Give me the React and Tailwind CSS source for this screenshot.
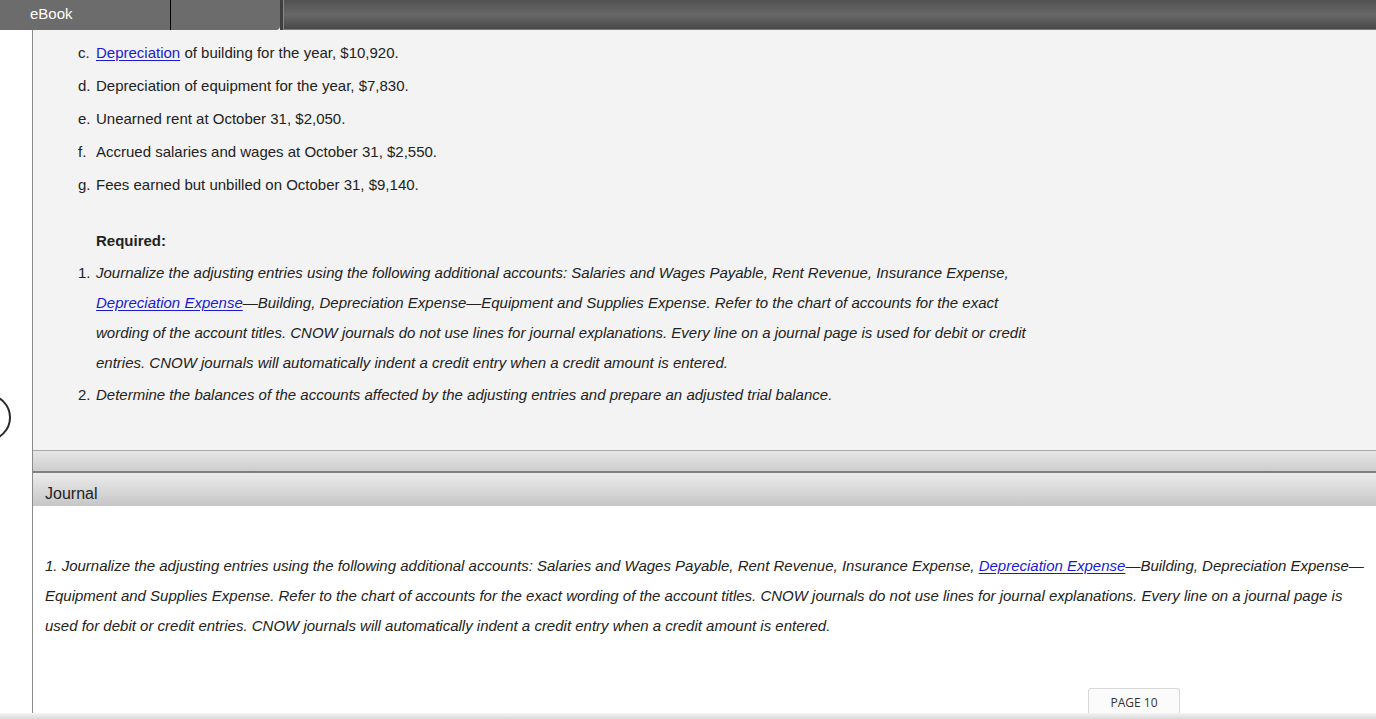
const LINK = 'text-[#1a1ad4] underline underline-offset-2';

const LETTERS = [
  ['c.', <><a className={LINK}>Depreciation</a> of building for the year, $10,920.</>],
  ['d.', 'Depreciation of equipment for the year, $7,830.'],
  ['e.', 'Unearned rent at October 31, $2,050.'],
  ['f.', 'Accrued salaries and wages at October 31, $2,550.'],
  ['g.', 'Fees earned but unbilled on October 31, $9,140.'],
];

function TopBar() {
  return (
    <div className="h-[30px] flex shrink-0">
      <div className="w-[280px] flex bg-[#6c6c6c] rounded-br-[4px]">
        <div className="w-[171px] border-r border-black pl-[30px] pt-[3px] text-[15px] text-white">eBook</div>
        <div className="flex-1" />
      </div>
      <div className="w-[3px] bg-[#3f3f3f]" />
      <div className="flex-1 border-l border-[#8a8a8a] border-b border-b-[#7a7a7a] bg-gradient-to-b from-[#515151] via-[#686868] to-[#484848]" />
    </div>
  );
}

function Requirements() {
  return (
    <div className="h-[421px] shrink-0 bg-[#f3f3f3] border-b border-[#a8a8a8] pl-[45px] pt-[6px] text-[15px] text-[#222]">
      {LETTERS.map(([m, t]) => (
        <div key={m} className="flex leading-[33px]">
          <span className="w-[18px]">{m}</span>
          <span>{t}</span>
        </div>
      ))}
      <div className="pl-[18px] mt-[25px] leading-[30px] font-bold">Required:</div>
      <div className="flex mt-[2px] leading-[30px]">
        <span className="w-[18px]">1.</span>
        <div className="italic whitespace-nowrap">
          <div>Journalize the adjusting entries using the following additional accounts: Salaries and Wages Payable, Rent Revenue, Insurance Expense,</div>
          <div><a className={LINK}>Depreciation Expense</a>—Building, Depreciation Expense—Equipment and Supplies Expense. Refer to the chart of accounts for the exact</div>
          <div>wording of the account titles. CNOW journals do not use lines for journal explanations. Every line on a journal page is used for debit or credit</div>
          <div>entries. CNOW journals will automatically indent a credit entry when a credit amount is entered.</div>
        </div>
      </div>
      <div className="flex mt-[2px] leading-[30px]">
        <span className="w-[18px]">2.</span>
        <span className="italic">Determine the balances of the accounts affected by the adjusting entries and prepare an adjusted trial balance.</span>
      </div>
    </div>
  );
}

function Journal() {
  return (
    <div className="flex-1 flex flex-col">
      <div className="h-[20px] bg-gradient-to-b from-[#e6e6e6] to-[#cdcdcd] border-b-2 border-[#808080] box-content" />
      <div className="h-[33px] bg-gradient-to-b from-[#ececec] to-[#c6c6c6] pl-[12px] pt-[12px] text-[16px] text-[#222] leading-[18px]">
        Journal
      </div>
      <div className="flex-1 bg-white pl-[12px] flex flex-col">
        <div className="mt-[45px] italic text-[15px] text-[#222] leading-[30px] whitespace-nowrap">
          <div>1. Journalize the adjusting entries using the following additional accounts: Salaries and Wages Payable, Rent Revenue, Insurance Expense, <a className={LINK}>Depreciation Expense</a>—Building, Depreciation Expense—</div>
          <div>Equipment and Supplies Expense. Refer to the chart of accounts for the exact wording of the account titles. CNOW journals do not use lines for journal explanations. Every line on a journal page is</div>
          <div>used for debit or credit entries. CNOW journals will automatically indent a credit entry when a credit amount is entered.</div>
        </div>
        <div className="mt-[47px] ml-[1043px] w-[92px] h-[25px] border border-b-0 border-[#d8d8d8] rounded-t-[3px] bg-[#fbfbfb] flex items-center justify-center pt-[3px] text-[12px] text-[#333] font-['Open_Sans',sans-serif]">
          PAGE 10
        </div>
      </div>
    </div>
  );
}

export default function App() {
  return (
    <div className="h-[719px] w-[1376px] overflow-hidden flex flex-col bg-white font-['Liberation_Sans',Arial,sans-serif]">
      <TopBar />
      <div className="flex-1 flex">
        <div className="w-[32px] relative shrink-0 border-r border-[#8a8a8a] box-content">
          <div className="absolute left-[-36px] top-[364px] w-[47px] h-[47px] rounded-full border-[2.5px] border-[#2a2a2a]" />
        </div>
        <div className="flex-1 flex flex-col">
          <Requirements />
          <Journal />
        </div>
      </div>
      <div className="h-[6px] shrink-0 bg-gradient-to-b from-[#f4f4f4] to-[#d9d9d9]" />
    </div>
  );
}
